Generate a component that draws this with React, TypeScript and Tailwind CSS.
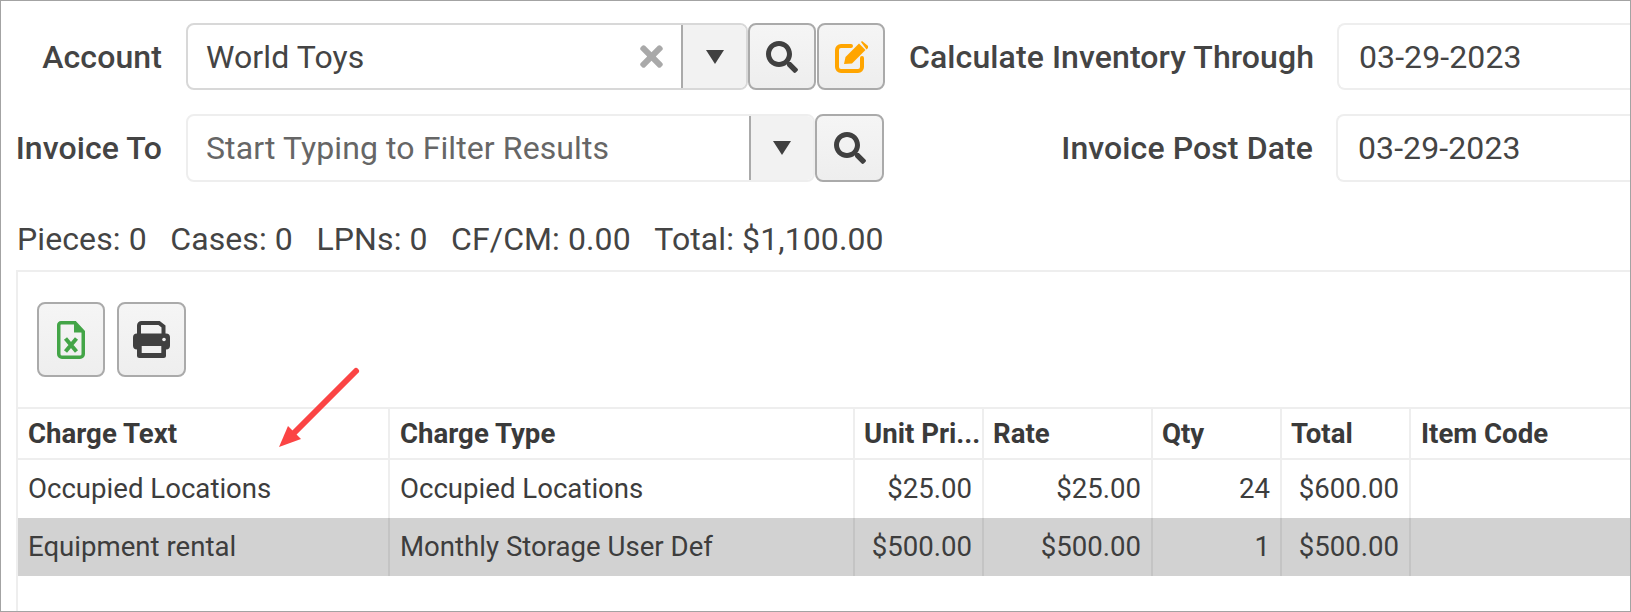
import React from 'react';
import { FaSearch, FaTimes } from 'react-icons/fa';

const columns = [
  { label: 'Charge Text', width: 'w-[372px]', right: false },
  { label: 'Charge Type', width: 'w-[465px]', right: false },
  { label: 'Unit Pri...', width: 'w-[129px]', right: true },
  { label: 'Rate', width: 'w-[169px]', right: true },
  { label: 'Qty', width: 'w-[129px]', right: true },
  { label: 'Total', width: 'w-[129px]', right: true },
  { label: 'Item Code', width: 'w-[240px]', right: false },
];

const rows = [
  ['Occupied Locations', 'Occupied Locations', '$25.00', '$25.00', '24', '$600.00', ''],
  ['Equipment rental', 'Monthly Storage User Def', '$500.00', '$500.00', '1', '$500.00', ''],
];

function IconButton({ children, className = '' }: { children: React.ReactNode; className?: string }) {
  return (
    <button className={`flex items-center justify-center rounded-lg border-2 border-[#aaaaaa] bg-gradient-to-b from-[#f5f5f5] to-[#eeeeee] ${className}`}>
      {children}
    </button>
  );
}

function Caret() {
  return (
    <svg width="18" height="14" viewBox="0 0 18 14">
      <path d="M0 0H18L9 14Z" fill="#404040" />
    </svg>
  );
}

function EditIcon() {
  return (
    <svg width="33" height="32" viewBox="0 0 33 32">
      <path d="M16 5H6a4 4 0 0 0-4 4v17a4 4 0 0 0 4 4h17a4 4 0 0 0 4-4V17" fill="none" stroke="#ffa500" strokeWidth="4" strokeLinecap="round" />
      <path d="M9 23l1.500-7L24 2.500 30.500 9 17 22.500Z" fill="#ffa500" />
      <path d="M26 1l1-1 5.500 4.500a2 2 0 0 1 0 3L31.500 8.500Z" fill="#ffa500" />
    </svg>
  );
}

function ExcelIcon() {
  return (
    <svg width="28" height="38" viewBox="0 0 28 38">
      <path d="M4 1.750h14l8.250 9V33a3.250 3.250 0 0 1-3.250 3.250H5A3.250 3.250 0 0 1 1.750 33V4A2.250 2.250 0 0 1 4 1.750Z" fill="none" stroke="#43a547" strokeWidth="3.500" />
      <path d="M17 1.500l9.500 10H17Z" fill="#43a547" />
      <path d="M8.500 17.500l11 13M19.500 17.500l-11 13" stroke="#43a547" strokeWidth="4" />
    </svg>
  );
}

function PrintIcon() {
  return (
    <svg width="37" height="37" viewBox="0 0 37 37">
      <path d="M6 14V4.500A2.500 2.500 0 0 1 8.500 2H26l4.500 3.500V14" fill="none" stroke="#404040" strokeWidth="4" />
      <rect x="0" y="12.500" width="37" height="16" rx="4" fill="#404040" />
      <rect x="4" y="20" width="29" height="17" rx="2.500" fill="#404040" />
      <rect x="8.700" y="25" width="19.600" height="7" fill="#f0f0f0" />
      <circle cx="31" cy="18.500" r="1.800" fill="#f0f0f0" />
    </svg>
  );
}

export default function App() {
  return (
    <div
      className="relative h-[612px] w-[1631px] overflow-hidden border border-[#a3a3a3] bg-white text-[32px] tracking-[0.1px] text-[#444444]"
      style={{ fontFamily: 'Roboto, sans-serif' }}
    >
      <div className="flex flex-col gap-[24px] pt-[22px]">
        <div className="flex h-[67px] items-center">
          <label className="w-[161px] text-right font-medium">Account</label>
          <div className="ml-[24px] flex h-full w-[562px] overflow-hidden rounded-lg border-2 border-[#d8d8d8]">
            <span className="flex flex-1 items-center pl-[18px]">World Toys</span>
            <span className="flex items-center pr-[13px]">
              <FaTimes className="text-[33px] text-[#a9a9a9]" />
            </span>
            <span className="flex w-[65px] items-center justify-center border-l-2 border-[#aaaaaa] bg-[#f2f2f2]">
              <Caret />
            </span>
          </div>
          <IconButton className="h-full w-[68px]">
            <FaSearch className="text-[32px] text-[#404040]" />
          </IconButton>
          <IconButton className="ml-px h-full w-[68px]">
            <EditIcon />
          </IconButton>
          <label className="ml-[24px] w-[405px] whitespace-nowrap text-right font-medium">Calculate Inventory Through</label>
          <div className="ml-[23px] flex h-full flex-1 items-center rounded-l-lg border-y-2 border-l-2 border-[#eeeeee] pl-[20px]">
            03-29-2023
          </div>
        </div>
        <div className="flex h-[68px] items-center">
          <label className="w-[161px] text-right font-medium">Invoice To</label>
          <div className="ml-[24px] flex h-full w-[629px] overflow-hidden rounded-lg border-2 border-[#eeeeee]">
            <span className="flex flex-1 items-center pl-[18px] text-[#666666]">Start Typing to Filter Results</span>
            <span className="flex w-[64px] items-center justify-center border-l-2 border-[#aaaaaa] bg-[#f2f2f2]">
              <Caret />
            </span>
          </div>
          <IconButton className="h-full w-[69px]">
            <FaSearch className="text-[32px] text-[#404040]" />
          </IconButton>
          <label className="ml-[24px] w-[405px] text-right font-medium">Invoice Post Date</label>
          <div className="ml-[23px] flex h-full flex-1 items-center rounded-l-lg border-y-2 border-l-2 border-[#eeeeee] pl-[20px]">
            03-29-2023
          </div>
        </div>
      </div>

      <div className="mt-[37px] flex h-[40px] items-center gap-[23.5px] pl-[16px]">
        <span>Pieces: 0</span>
        <span>Cases: 0</span>
        <span>LPNs: 0</span>
        <span>CF/CM: 0.00</span>
        <span>Total: $1,100.00</span>
      </div>

      <div className="ml-[15px] mt-[11px] h-[345px] border-l-2 border-t-2 border-[#eeeeee]">
        <div className="flex h-[135px] gap-[12px] pl-[19px] pt-[30px]">
          <IconButton className="h-[75px] w-[68px]">
            <ExcelIcon />
          </IconButton>
          <IconButton className="h-[75px] w-[69px]">
            <PrintIcon />
          </IconButton>
        </div>

        <div className="flex h-[53px] border-y-2 border-[#eeeeee] text-[27.6px] font-bold tracking-normal text-[#3a3a3a]">
          {columns.map((col) => (
            <div key={col.label} className={`${col.width} flex shrink-0 items-center overflow-hidden whitespace-nowrap border-r-2 border-[#eeeeee] pr-[4px] ${col.right ? 'pl-[9px]' : 'pl-[10px]'}`}>
              {col.label}
            </div>
          ))}
        </div>

        {rows.map((row, rowIdx) => (
          <div key={rowIdx} className={`flex h-[58px] text-[27.6px] tracking-normal text-[#3d3d3d] ${rowIdx === 1 ? 'bg-[#d2d2d2]' : 'bg-white'}`}>
            {row.map((cell, i) => (
              <div
                key={i}
                className={`${columns[i].width} flex shrink-0 items-center whitespace-nowrap border-r-2 px-[10px] ${rowIdx === 1 ? 'border-[#c4c4c4]' : 'border-[#eeeeee]'} ${columns[i].right ? 'justify-end' : ''}`}
              >
                {cell}
              </div>
            ))}
          </div>
        ))}
      </div>

      {/* annotation arrow on top of the header */}
      <svg className="absolute left-0 top-0" width="1631" height="612" viewBox="0 0 1631 612">
        <path d="M355 370 L291 434" stroke="#fb4444" strokeWidth="6" strokeLinecap="round" fill="none" />
        <path d="M278 446 L287 425 L300 438 Z" fill="#fb4444" />
      </svg>
    </div>
  );
}
